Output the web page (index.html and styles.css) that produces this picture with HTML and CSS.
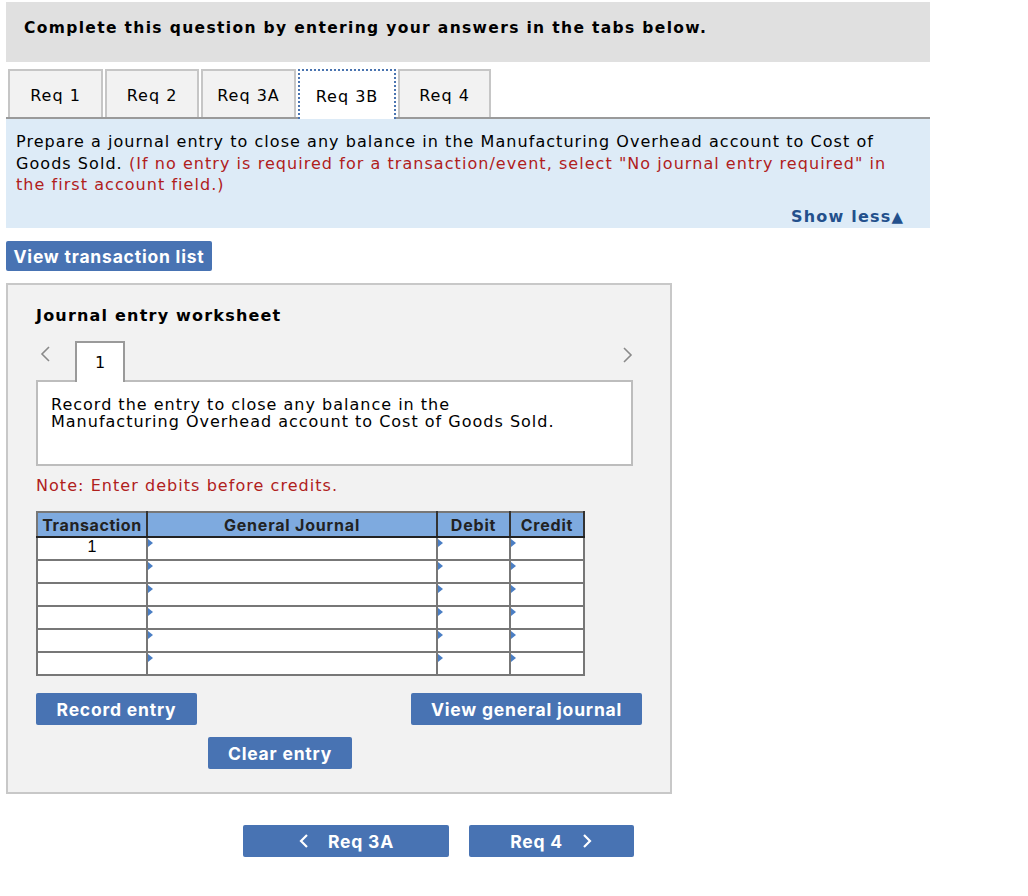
FILE: index.html
```html
<!DOCTYPE html>
<html>
<head>
<meta charset="utf-8">
<link rel="stylesheet" href="styles.css">
</head>
<body>
<div class="page">
  <div class="banner">Complete this question by entering your answers in the tabs below.</div>

  <div class="tabs">
    <div class="tab t1">Req 1</div>
    <div class="tab t2">Req 2</div>
    <div class="tab t3">Req 3A</div>
    <div class="tab t4 active">Req 3B</div>
    <div class="tab t5">Req 4</div>
  </div>

  <div class="info">
    <p class="instr">Prepare a journal entry to close any balance in the Manufacturing Overhead account to Cost of Goods Sold. <span class="red">(If no entry is required for a transaction/event, select "No journal entry required" in the first account field.)</span></p>
    <div class="showless">Show less<span class="tri">&#9650;</span></div>
  </div>

  <button class="btn btn-list">View transaction list</button>

  <div class="panel">
    <h2 class="ptitle">Journal entry worksheet</h2>
    <div class="navrow">
      <svg class="chev" width="12" height="18" viewBox="0 0 12 18"><path d="M10 2 L3 9 L10 16" fill="none" stroke="#8a8a8a" stroke-width="1.6"/></svg>
      <div class="ntab">1</div>
      <div class="spacer"></div>
      <svg class="chev chev-r" width="12" height="18" viewBox="0 0 12 18"><path d="M2 2 L9 9 L2 16" fill="none" stroke="#8a8a8a" stroke-width="1.6"/></svg>
    </div>
    <div class="desc">Record the entry to close any balance in the<br>Manufacturing Overhead account to Cost of Goods Sold.</div>
    <div class="note">Note: Enter debits before credits.</div>

    <table class="jt">
      <thead>
        <tr><th class="c1">Transaction</th><th class="c2">General Journal</th><th class="c3">Debit</th><th class="c4">Credit</th></tr>
      </thead>
      <tbody>
        <tr><td class="num">1</td><td class="mk"></td><td class="mk"></td><td class="mk"></td></tr>
        <tr><td></td><td class="mk"></td><td class="mk"></td><td class="mk"></td></tr>
        <tr><td></td><td class="mk"></td><td class="mk"></td><td class="mk"></td></tr>
        <tr><td></td><td class="mk"></td><td class="mk"></td><td class="mk"></td></tr>
        <tr><td></td><td class="mk"></td><td class="mk"></td><td class="mk"></td></tr>
        <tr><td></td><td class="mk"></td><td class="mk"></td><td class="mk"></td></tr>
      </tbody>
    </table>

    <div class="actions">
      <button class="btn btn-record">Record entry</button>
      <button class="btn btn-view">View general journal</button>
    </div>
    <div class="actions2">
      <button class="btn btn-clear">Clear entry</button>
    </div>
  </div>

  <div class="bottomnav">
    <button class="btn btn-prev"><svg width="12" height="16" viewBox="0 0 12 16"><path d="M9 2 L3 8 L9 14" fill="none" stroke="#fff" stroke-width="2.2"/></svg><span>Req 3A</span></button>
    <button class="btn btn-next"><span>Req 4</span><svg width="12" height="16" viewBox="0 0 12 16"><path d="M3 2 L9 8 L3 14" fill="none" stroke="#fff" stroke-width="2.2"/></svg></button>
  </div>
</div>
</body>
</html>
```

FILE: styles.css
```css
* { box-sizing: border-box; }
body {
  margin: 0;
  background: #fff;
  font-family: "DejaVu Sans", Verdana, sans-serif;
  color: #000;
}
.page {
  padding: 2px 0 0 6px;
  width: 930px;
}
.banner {
  background: #e0e0e0;
  height: 60px;
  padding: 17px 0 0 18px;
  font-weight: bold;
  font-size: 15.5px;
  letter-spacing: 1.35px;
}
.tabs {
  display: flex;
  align-items: flex-end;
  gap: 2px;
  margin-top: 7px;
  padding-left: 2px;
  border-bottom: 2px solid #9a9a9a;
  height: 50px;
}
.tab {
  height: 48px;
  background: #f2f2f2;
  border: 2px solid #c6c6c6;
  border-bottom: none;
  font-size: 16px;
  letter-spacing: 1px;
  display: flex;
  align-items: center;
  justify-content: center;
  padding-top: 2px;
}
.t1 { width: 95px; }
.t2 { width: 94px; }
.t3 { width: 95px; }
.t4 { width: 98px; }
.t5 { width: 93px; }
.tab.active {
  background: #fff;
  border: 2px dotted #4a74b0;
  border-bottom: none;
  height: 50px;
  margin-bottom: -2px;
}
.info {
  background: #ddebf7;
  height: 109px;
  padding: 12px 27px 2px 10px;
  display: flex;
  flex-direction: column;
}
.instr {
  margin: 0;
  font-size: 16px;
  line-height: 21.5px;
  letter-spacing: 1.05px;
}
.red { color: #b0201c; }
.showless {
  text-align: right;
  margin-top: auto;
  font-weight: bold;
  font-size: 16px;
  letter-spacing: 1.2px;
  color: #23508c;
}
.tri { font-size: 15px; letter-spacing: 0; }
.btn {
  background: #4873b3;
  color: #fff;
  border: none;
  border-radius: 2px;
  font-family: Inter, "Liberation Sans", Arial, sans-serif;
  font-weight: 700;
  font-size: 17.5px;
  letter-spacing: 0.8px;
  padding: 0;
  cursor: pointer;
}
.btn-list {
  margin-top: 13px;
  width: 206px;
  height: 30px;
  display: block;
}
.panel {
  margin-top: 12px;
  width: 666px;
  height: 511px;
  background: #f2f2f2;
  border: 2px solid #c8c8c8;
  padding: 20px 0 0 28px;
}
.ptitle {
  margin: 0;
  font-size: 16px;
  font-weight: bold;
  line-height: 22px;
  letter-spacing: 1.2px;
}
.navrow {
  display: flex;
  align-items: flex-end;
  margin-top: 13px;
  width: 597px;
  height: 40px;
}
.chev { align-self: flex-start; margin: 5px 0 0 3px; }
.ntab {
  margin-left: 24px;
  width: 50px;
  height: 41px;
  background: #fff;
  border: 2px solid #9a9a9a;
  border-bottom: none;
  font-size: 16px;
  text-align: center;
  padding-top: 10px;
  margin-bottom: -2px;
  position: relative;
  z-index: 1;
}
.spacer { flex: 1; }
.chev-r { margin: 6px -1px 0 0; align-self: flex-start; }
.desc {
  width: 597px;
  height: 86px;
  background: #fff;
  border: 2px solid #bdbdbd;
  padding: 14px 0 0 13px;
  font-size: 16px;
  line-height: 17px;
  letter-spacing: 1px;
}
.note {
  color: #b0201c;
  font-size: 16px;
  margin-top: 10px;
  line-height: 20px;
  letter-spacing: 1.05px;
}
.jt {
  margin-top: 15px;
  border-collapse: collapse;
  font-family: Inter, "Liberation Sans", Arial, sans-serif;
  width: 547px;
  table-layout: fixed;
  border: 2px solid #777;
}
.jt th {
  background: #7eaadf;
  font-size: 16px;
  font-weight: 700;
  letter-spacing: 0.8px;
  color: #222;
  height: 25px;
  padding: 0;
  border: 2px solid #333;
  border-top: 2px solid #777;
  border-bottom: 2px solid #222;
}
.jt th.c1 { width: 110px; border-left-color: #777; letter-spacing: 0.6px; }
.jt th.c2 { width: 290px; }
.jt th.c3 { width: 73px; }
.jt th.c4 { width: 74px; border-right-color: #333; }
.jt td {
  background: #fff;
  height: 23px;
  border: 2px solid #777;
  padding: 0;
  position: relative;
}
.jt td.num {
  text-align: center;
  font-size: 16px;
  font-family: "Liberation Sans", Arial, sans-serif;
  vertical-align: top;
  line-height: 18px;
}
.jt td.mk::before {
  content: "";
  position: absolute;
  left: 0;
  top: 1px;
  border-left: 5px solid #4a7ec4;
  border-top: 4px solid transparent;
  border-bottom: 4px solid transparent;
}
.actions {
  display: flex;
  justify-content: space-between;
  width: 606px;
  margin-top: 17px;
}
.btn-record { width: 161px; height: 32px; }
.btn-view { width: 231px; height: 32px; }
.actions2 {
  margin-top: 12px;
  padding-left: 172px;
}
.btn-clear { width: 144px; height: 32px; }
.bottomnav {
  display: flex;
  gap: 20px;
  margin-top: 31px;
  padding-left: 237px;
}
.btn-prev, .btn-next {
  height: 32px;
  display: flex;
  align-items: center;
  justify-content: center;
  gap: 18px;
}
.btn-prev { width: 206px; }
.btn-next { width: 165px; }
```
